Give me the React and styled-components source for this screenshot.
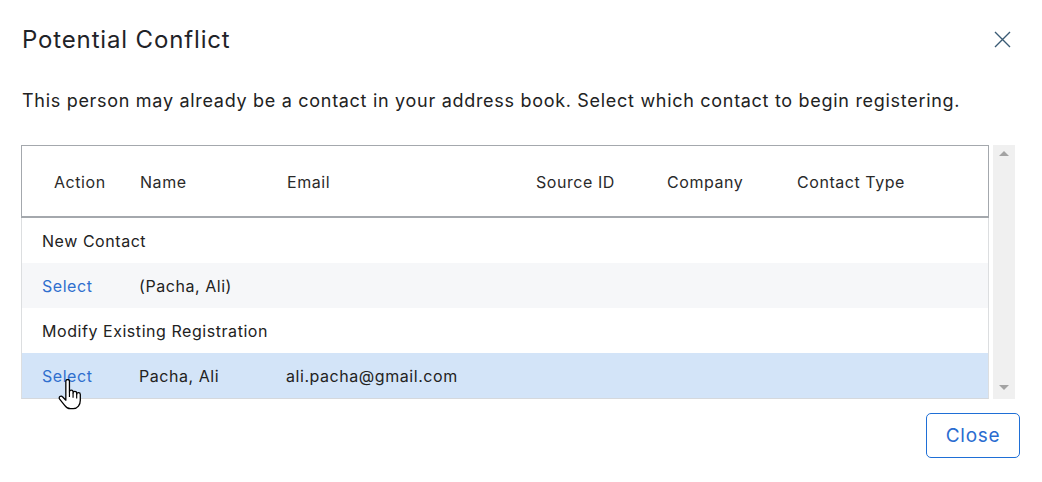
import React from "react";
import styled, { createGlobalStyle } from "styled-components";

const Global = createGlobalStyle`
  html, body { margin: 0; padding: 0; background: #fff; }
  body { font-family: Inter, "Noto Sans", Arial, sans-serif; color: #222; letter-spacing: 0.55px; }
  * { box-sizing: border-box; }
`;

const Dialog = styled.div`
  width: 1042px;
  height: 482px;
  padding: 0 22px 0 22px;
  display: flex;
  flex-direction: column;
`;

const Header = styled.div`
  display: flex;
  align-items: center;
  justify-content: space-between;
  height: 78px;
  padding-top: 1px;
`;

const Title = styled.h1`
  margin: 0;
  font-size: 24px;
  font-weight: 400;
  color: #1f2328;
  letter-spacing: 0.85px;
`;

const CloseX = styled.button`
  border: 0;
  background: none;
  padding: 0;
  width: 20px;
  height: 20px;
  margin-right: 8px;
  display: flex;
  align-items: center;
  justify-content: center;
  cursor: pointer;
`;

const Description = styled.p`
  margin: 9px 0 0 0;
  font-size: 18px;
  line-height: 28px;
  color: #222;
  letter-spacing: 0.7px;
`;

const TableArea = styled.div`
  display: flex;
  gap: 4px;
  margin-top: 30px;
  margin-left: -1px;
`;

const Table = styled.div`
  width: 968px;
  display: flex;
  flex-direction: column;
`;

const HeadRow = styled.div`
  display: grid;
  grid-template-columns: 118px 147px 249px 131px 130px 1fr;
  align-items: center;
  height: 73px;
  border: 1px solid #a4a8ad;
  border-bottom-width: 2px;
`;

const HeadCell = styled.div`
  font-size: 16px;
  color: #2a2a2a;
  padding-left: ${(p) => (p.$first ? "32px" : "0")};
  padding-top: 1px;
`;

const Body = styled.div`
  border-left: 1px solid #dcdee0;
  border-right: 1px solid #dcdee0;
  border-bottom: 1px solid #d5d8dc;
  position: relative;
`;

const Row = styled.div`
  display: grid;
  grid-template-columns: 117px 147px 1fr;
  align-items: center;
  height: 45px;
  background: ${(p) => p.$bg || "#fff"};
  font-size: 16px;
  color: #222;
`;

const GroupRow = styled.div`
  height: 45px;
  display: flex;
  align-items: center;
  padding-left: 20px;
  font-size: 16px;
  color: #222;
  background: #fff;
`;

const Cell = styled.div`
  padding-left: ${(p) => (p.$first ? "20px" : "0")};
  white-space: nowrap;
`;

const SelectLink = styled.a`
  color: #2f6fce;
  text-decoration: none;
  cursor: pointer;
`;

const Scrollbar = styled.div`
  width: 22px;
  height: 254px;
  background: #f0f0f0;
  display: flex;
  flex-direction: column;
  justify-content: space-between;
  align-items: center;
  padding: 6px 0 9px;
`;

const Arrow = styled.div`
  width: 0;
  height: 0;
  border-left: 5px solid transparent;
  border-right: 5px solid transparent;
  ${(p) =>
    p.$up
      ? "border-bottom: 5px solid #a3a3a3;"
      : "border-top: 5px solid #a3a3a3;"}
`;

const Footer = styled.div`
  display: flex;
  justify-content: flex-end;
  margin-top: 14px;
`;

const Button = styled.button`
  width: 94px;
  height: 45px;
  border: 1px solid #1f6fd6;
  border-radius: 5px;
  background: #fff;
  color: #2a6cd0;
  font-family: inherit;
  font-size: 19px;
  letter-spacing: 0.7px;
  cursor: pointer;
`;

const Pointer = styled.svg`
  position: absolute;
  left: 36px;
  bottom: -12px;
  pointer-events: none;
`;

export default function App() {
  return (
    <>
      <Global />
      <Dialog>
        <Header>
          <Title>Potential Conflict</Title>
          <CloseX aria-label="Close">
            <svg width="17" height="17" viewBox="0 0 17 17">
              <path d="M1 1 L16 16 M16 1 L1 16" stroke="#3a5b74" strokeWidth="1.4" fill="none" />
            </svg>
          </CloseX>
        </Header>
        <Description>
          This person may already be a contact in your address book. Select which contact to begin registering.
        </Description>
        <TableArea>
          <Table>
            <HeadRow>
              <HeadCell $first>Action</HeadCell>
              <HeadCell>Name</HeadCell>
              <HeadCell>Email</HeadCell>
              <HeadCell>Source ID</HeadCell>
              <HeadCell>Company</HeadCell>
              <HeadCell>Contact Type</HeadCell>
            </HeadRow>
            <Body>
              <GroupRow>New Contact</GroupRow>
              <Row $bg="#f6f7f9">
                <Cell $first><SelectLink>Select</SelectLink></Cell>
                <Cell>(Pacha, Ali)</Cell>
                <Cell></Cell>
              </Row>
              <GroupRow>Modify Existing Registration</GroupRow>
              <Row $bg="#d3e4f8">
                <Cell $first><SelectLink>Select</SelectLink></Cell>
                <Cell>Pacha, Ali</Cell>
                <Cell>ali.pacha@gmail.com</Cell>
              </Row>
              <Pointer width="26" height="31" viewBox="0 0 20 24">
                <path
                  d="M6 1.8 a1.4 1.4 0 0 1 2.8 0 V10 a1.4 1.4 0 0 1 2.8 0 v1 a1.4 1.4 0 0 1 2.8 0 v1 a1.4 1.4 0 0 1 2.8 0 v4.5 c0 3.5 -2 6.5 -5.5 6.5 h-2.2 c-2.2 0 -3.3 -1 -4.4 -2.6 L1.2 15.6 a1.4 1.4 0 0 1 2.2 -1.8 L6 16.4 Z"
                  fill="#fff"
                  stroke="#000"
                  strokeWidth="1"
                  strokeLinejoin="round"
                />
                <path d="M8.8 10 v4 M11.6 11 v3.5 M14.4 12 v3" stroke="#000" strokeWidth="0.9" />
              </Pointer>
            </Body>
          </Table>
          <Scrollbar>
            <Arrow $up />
            <Arrow />
          </Scrollbar>
        </TableArea>
        <Footer>
          <Button>Close</Button>
        </Footer>
      </Dialog>
    </>
  );
}
